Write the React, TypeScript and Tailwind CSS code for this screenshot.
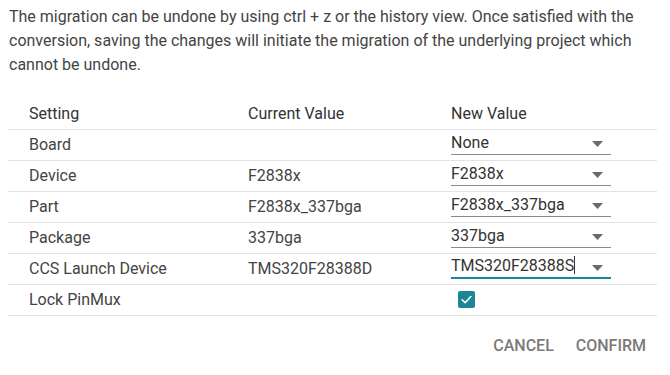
import React from 'react';

const rows = [
  { setting: 'Board', current: '', next: 'None' },
  { setting: 'Device', current: 'F2838x', next: 'F2838x' },
  { setting: 'Part', current: 'F2838x_337bga', next: 'F2838x_337bga' },
  { setting: 'Package', current: '337bga', next: '337bga' },
  { setting: 'CCS Launch Device', current: 'TMS320F28388D', next: 'TMS320F28388S', focused: true },
];

const Arrow = () => (
  <svg width="11" height="6" viewBox="0 0 11 6" className="absolute right-[8px] top-[11px]">
    <path d="M0 0 L11 0 L5.5 6 Z" fill="#6b6b6b" />
  </svg>
);

const SelectBox: React.FC<{ value: string; focused?: boolean }> = ({ value, focused }) => (
  <div
    className={
      focused
        ? 'relative w-[160px] h-[25px] border-b-2 border-[#1b8696] flex items-end'
        : 'relative w-[160px] h-[25px] border-b border-[#8a8a8a] flex items-end'
    }
  >
    <span className="leading-[22px] text-[#333]">
      {value}
      {focused && <span className="inline-block w-px h-[18px] bg-[#333] align-[-3px]" />}
    </span>
    <Arrow />
  </div>
);

export default function App() {
  return (
    <div className="w-[670px] h-[375px] bg-white px-[8px] text-[16px] text-[#444]" style={{ fontFamily: 'Roboto, "Liberation Sans", sans-serif' }}>
      <p className="pt-[5px] pl-px pr-[8px] leading-[24px]">
        The migration can be undone by using ctrl + z or the history view. Once satisfied with the conversion, saving the
        changes will initiate the migration of the underlying project which cannot be undone.
      </p>

      <div className="mt-[21px] w-[649px]">
        <div className="grid grid-cols-[240px_203px_1fr] h-[32px] items-center border-b border-[#e3e3e3] text-[#333]">
          <div className="pl-[21px]">Setting</div>
          <div>Current Value</div>
          <div>New Value</div>
        </div>
        {rows.map((r) => (
          <div key={r.setting} className="grid grid-cols-[240px_203px_1fr] h-[31px] border-b border-[#e3e3e3]">
            <div className="pl-[21px] leading-[30px]">{r.setting}</div>
            <div className="leading-[30px]">{r.current}</div>
            <div>
              <SelectBox value={r.next} focused={r.focused} />
            </div>
          </div>
        ))}
        <div className="grid grid-cols-[240px_203px_1fr] h-[31px] border-b border-[#e3e3e3]">
          <div className="pl-[21px] leading-[30px]">Lock PinMux</div>
          <div />
          <div className="pl-[7px] pt-[6px]">
            <div className="w-[17px] h-[17px] rounded-[2px] bg-[#1b8696] flex items-center justify-center">
              <svg width="13" height="13" viewBox="0 0 24 24" fill="none" stroke="white" strokeWidth="3" strokeLinecap="round" strokeLinejoin="round">
                <path d="M4 12.5 L9.5 18 L20 6.5" />
              </svg>
            </div>
          </div>
        </div>
      </div>

      <div className="flex justify-end gap-[22px] pr-[16px] mt-[18px] font-medium text-[#7a7a7a]">
        <span>CANCEL</span>
        <span>CONFIRM</span>
      </div>
    </div>
  );
}
